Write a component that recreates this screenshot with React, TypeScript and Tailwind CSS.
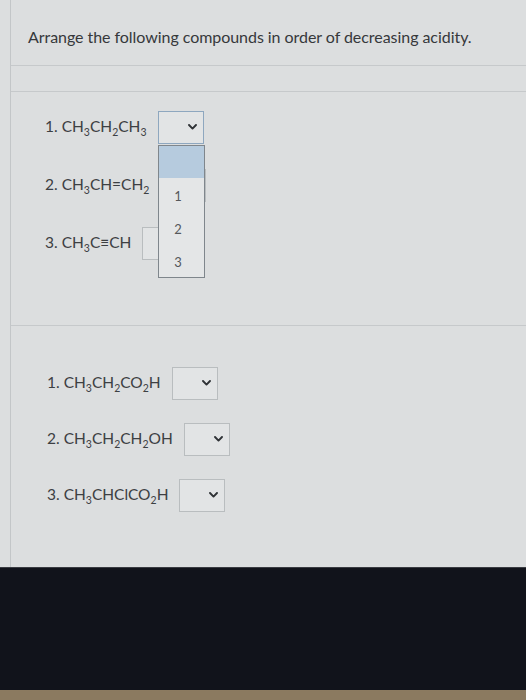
import React from 'react';

type Part = { t: string; sub?: boolean };

function Formula({ parts }: { parts: Part[] }) {
    return (
        <span className="whitespace-nowrap">
            {parts.map((p, i) =>
                p.sub ? (
                    <span key={i} className="inline-block text-[10.5px] translate-y-[4px]">{p.t}</span>
                ) : (
                    <span key={i}>{p.t}</span>
                )
            )}
        </span>
    );
}

function Chevron() {
    return (
        <svg width="9" height="6" viewBox="0 0 9 6" className="absolute right-[6px] top-1/2 -translate-y-1/2">
            <path d="M1 1 L4.5 4.6 L8 1" fill="none" stroke="#2f3236" strokeWidth="1.9" strokeLinecap="round" strokeLinejoin="round" />
        </svg>
    );
}

function SelectBox({ open, focused }: { open?: boolean; focused?: boolean }) {
    return (
        <div
            className={
                'relative w-[46px] h-[33px] ml-[11px] bg-[#e2e4e5] border ' +
                (focused ? 'border-[#8ea7bf]' : 'border-[#b9bdbf]')
            }
        >
            <Chevron />
            {open && (
                <div className="absolute left-[-1px] top-[33px] w-[47px] h-[133px] bg-[#e4e6e7] border border-[#7f868c] z-10 flex flex-col">
                    <div className="h-[32px] bg-[#b6cbde]" />
                    {['1', '2', '3'].map((n) => (
                        <div key={n} className="h-[33px] flex items-center justify-center pr-[6px] pt-[6px] text-[13px] text-[#55585b]">
                            {n}
                        </div>
                    ))}
                </div>
            )}
        </div>
    );
}

function Row({ label, parts, open, focused }: { label: string; parts: Part[]; open?: boolean; focused?: boolean }) {
    return (
        <div className="flex items-center h-[34px]">
            <span className="text-[15.5px] text-[#3d4043]">
                {label} <Formula parts={parts} />
            </span>
            <SelectBox open={open} focused={focused} />
        </div>
    );
}

export default function App() {
    return (
        <div className="w-[526px] h-[700px] bg-[#dcdedf] flex flex-col overflow-hidden font-['Lato','Liberation_Sans',sans-serif]">
            <div className="h-[567px] pl-[10px] flex-none">
                <div className="h-full border-l border-[#c3c6c8] flex flex-col">
                    {/* question header */}
                    <div className="h-[66px] border-b border-[#c6c9cb] pl-[17px] pt-[25px]">
                        <p className="text-[16px] text-[#36383b] tracking-[-0.05px]">
                            Arrange the following compounds in order of decreasing acidity.
                        </p>
                    </div>

                    {/* first group */}
                    <div className="mt-[25px] h-[234px] border-t border-[#c6c9cb] pl-[34px] pt-[18px] flex flex-col gap-[24px]">
                        <Row
                            label="1."
                            parts={[{ t: 'CH' }, { t: '3', sub: true }, { t: 'CH' }, { t: '2', sub: true }, { t: 'CH' }, { t: '3', sub: true }]}
                            open
                            focused
                        />
                        <Row
                            label="2."
                            parts={[{ t: 'CH' }, { t: '3', sub: true }, { t: 'CH=CH' }, { t: '2', sub: true }]}
                        />
                        <Row label="3." parts={[{ t: 'CH' }, { t: '3', sub: true }, { t: 'C≡CH' }]} />
                    </div>

                    {/* second group */}
                    <div className="flex-1 border-t border-[#c6c9cb] pl-[36px] pt-[40px] flex flex-col gap-[22px]">
                        <Row
                            label="1."
                            parts={[{ t: 'CH' }, { t: '3', sub: true }, { t: 'CH' }, { t: '2', sub: true }, { t: 'CO' }, { t: '2', sub: true }, { t: 'H' }]}
                        />
                        <Row
                            label="2."
                            parts={[{ t: 'CH' }, { t: '3', sub: true }, { t: 'CH' }, { t: '2', sub: true }, { t: 'CH' }, { t: '2', sub: true }, { t: 'OH' }]}
                        />
                        <Row
                            label="3."
                            parts={[{ t: 'CH' }, { t: '3', sub: true }, { t: 'CHClCO' }, { t: '2', sub: true }, { t: 'H' }]}
                        />
                    </div>
                </div>
            </div>
            <div className="flex-1 bg-[#11131b] border-t border-[#3a3c42]" />
            <div className="h-[10px] bg-[#8b7a60]" />
        </div>
    );
}
